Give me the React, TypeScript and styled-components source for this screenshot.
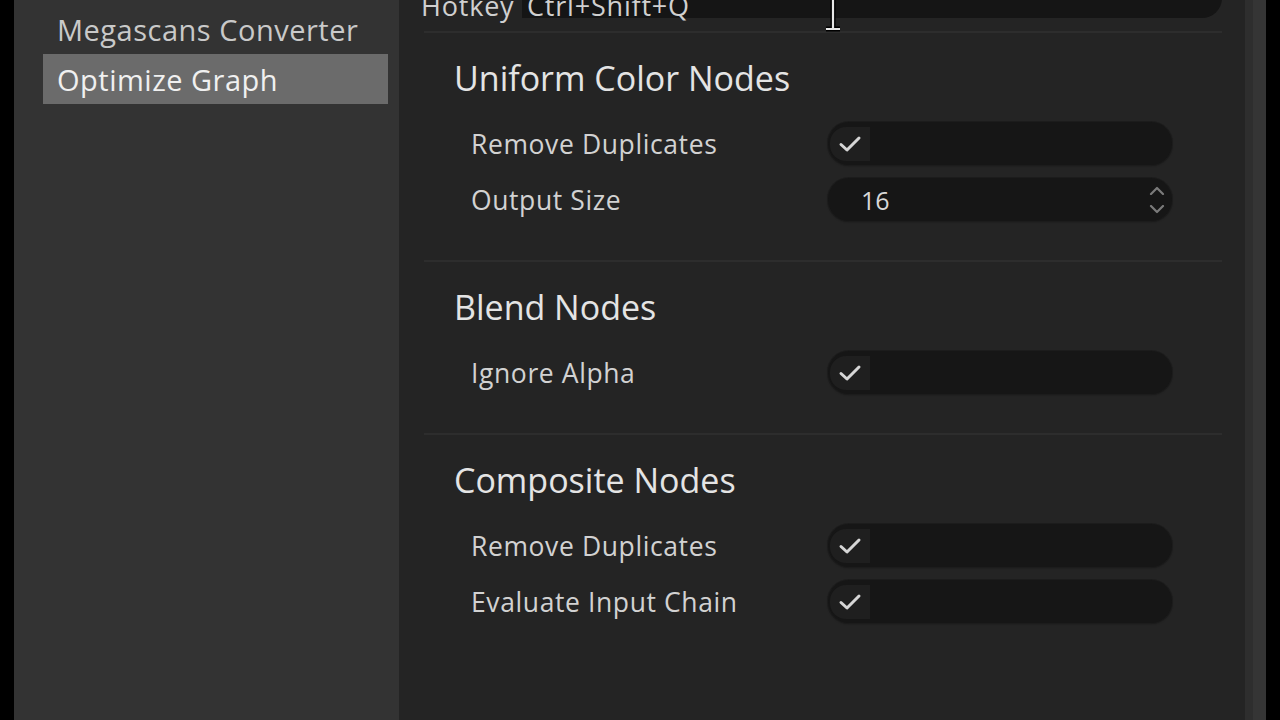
import React from "react"
import styled, { createGlobalStyle } from "styled-components"

const GlobalStyle = createGlobalStyle`
  html, body {
    margin: 0;
    padding: 0;
    background: #000;
    overflow: hidden;
  }
  * { box-sizing: border-box; }
`

const Window = styled.div`
  display: flex;
  width: 1252px;
  height: 720px;
  margin-left: 14px;
  font-family: "Open Sans", "DejaVu Sans", sans-serif;
  color: #d6d6d6;
`

const Sidebar = styled.nav`
  width: 385px;
  flex-shrink: 0;
  background: #333333;
  padding: 4px 11px 0 29px;
  display: flex;
  flex-direction: column;
`

const NavItem = styled.div<{ $active?: boolean }>`
  height: 50px;
  display: flex;
  align-items: center;
  padding-left: 14px;
  font-size: 29px;
  letter-spacing: 0.5px;
  color: ${(p) => (p.$active ? "#f0f0f0" : "#c9c9c9")};
  background: ${(p) => (p.$active ? "#6b6b6b" : "transparent")};
`

const Main = styled.main`
  flex: 1;
  display: flex;
  background: #242424;
`

const Scroller = styled.div`
  flex: 1;
  position: relative;
  overflow: hidden;
  padding: 0 23px 0 25px;
`

const ScrollTrack = styled.div`
  width: 21px;
  flex-shrink: 0;
  background: linear-gradient(to right, #2e2e2e 0 8px, #353535 8px);
`

const HotkeyRow = styled.div`
  height: 43px;
  margin-top: -25px;
  margin-left: -3px;
  display: flex;
  align-items: center;
  font-size: 27px;
  letter-spacing: 0.8px;
  color: #d0d0d0;
`

const HotkeyLabel = styled.span`
  width: 101px;
  padding-top: 18px;
`

const HotkeyField = styled.div`
  flex: 1;
  height: 100%;
  background: #151515;
  border-radius: 0 0 20px 0;
  padding: 18px 0 0 5px;
  display: flex;
  align-items: center;
`

const Divider = styled.div<{ $gap?: number }>`
  height: 2px;
  background: #2d2d2d;
  margin-top: ${(p) => p.$gap ?? 0}px;
`

const Section = styled.section`
  padding: 23px 0 39px 30px;
  display: flex;
  flex-direction: column;
  gap: 13px;
`

const Heading = styled.h2`
  margin: 0 0 9px;
  height: 44px;
  line-height: 44px;
  font-size: 34px;
  font-weight: 400;
  color: #e4e4e4;
`

const Row = styled.div`
  display: flex;
  align-items: center;
  height: 43px;
`

const Label = styled.span`
  width: 374px;
  padding-left: 17px;
  font-size: 26.5px;
  letter-spacing: 0.6px;
  color: #d2d2d2;
`

const Field = styled.div`
  width: 344px;
  height: 43px;
  border-radius: 21px;
  background: #161616;
  box-shadow: 0 0 0 1px #1c1c1c, 0 1px 2px rgba(0, 0, 0, 0.35);
  display: flex;
  align-items: center;
  position: relative;
  overflow: hidden;
`

const CheckCell = styled.div`
  width: 40px;
  height: 34px;
  margin-left: 2px;
  border-radius: 16px 0 0 16px;
  background: #1f1f1f;
  display: flex;
  align-items: center;
  justify-content: center;
`

const NumberText = styled.span`
  padding-left: 33px;
  flex: 1;
  font-size: 25px;
  color: #d8d8d8;
`

const SpinArrows = styled.div`
  width: 30px;
  display: flex;
  flex-direction: column;
  align-items: center;
  gap: 10px;
`

const CursorOverlay = styled.svg`
  position: absolute;
  left: 424px;
  top: 0;
  pointer-events: none;
`

const Check = () => (
  <svg width="24" height="18" viewBox="0 0 24 18">
    <path d="M3 9.5 L9 15 L21 3" fill="none" stroke="#d6d6d6" strokeWidth="3" strokeLinecap="round" strokeLinejoin="round" />
  </svg>
)

const Chevron = ({ up }: { up?: boolean }) => (
  <svg width="16" height="9" viewBox="0 0 16 9">
    <path
      d={up ? "M2 8 L8 2 L14 8" : "M2 1 L8 7 L14 1"}
      fill="none"
      stroke="#7a7a7a"
      strokeWidth="2.2"
      strokeLinecap="round"
      strokeLinejoin="round"
    />
  </svg>
)

const CheckRow = ({ label }: { label: string }) => (
  <Row>
    <Label>{label}</Label>
    <Field>
      <CheckCell>
        <Check />
      </CheckCell>
    </Field>
  </Row>
)

const SpinRow = ({ label, value }: { label: string; value: number }) => (
  <Row>
    <Label>{label}</Label>
    <Field>
      <NumberText>{value}</NumberText>
      <SpinArrows>
        <Chevron up />
        <Chevron />
      </SpinArrows>
    </Field>
  </Row>
)

export default function App() {
  return (
    <>
      <GlobalStyle />
      <Window>
        <Sidebar>
          <NavItem>Megascans Converter</NavItem>
          <NavItem $active>Optimize Graph</NavItem>
        </Sidebar>
        <Main>
          <Scroller>
            <HotkeyRow>
              <HotkeyLabel>Hotkey</HotkeyLabel>
              <HotkeyField>Ctrl+Shift+Q</HotkeyField>
            </HotkeyRow>
            <Divider $gap={13} />
            <Section>
              <Heading>Uniform Color Nodes</Heading>
              <CheckRow label="Remove Duplicates" />
              <SpinRow label="Output Size" value={16} />
            </Section>
            <Divider />
            <Section>
              <Heading>Blend Nodes</Heading>
              <CheckRow label="Ignore Alpha" />
            </Section>
            <Divider />
            <Section>
              <Heading>Composite Nodes</Heading>
              <CheckRow label="Remove Duplicates" />
              <CheckRow label="Evaluate Input Chain" />
            </Section>
            <CursorOverlay width="20" height="34" viewBox="0 0 20 34">
              <path d="M10 0 V28 M3 29 H17" stroke="#000" strokeWidth="5" />
              <path d="M10 0 V28 M3 29 H17" stroke="#e8e8e8" strokeWidth="2.2" />
            </CursorOverlay>
          </Scroller>
          <ScrollTrack />
        </Main>
      </Window>
    </>
  )
}
